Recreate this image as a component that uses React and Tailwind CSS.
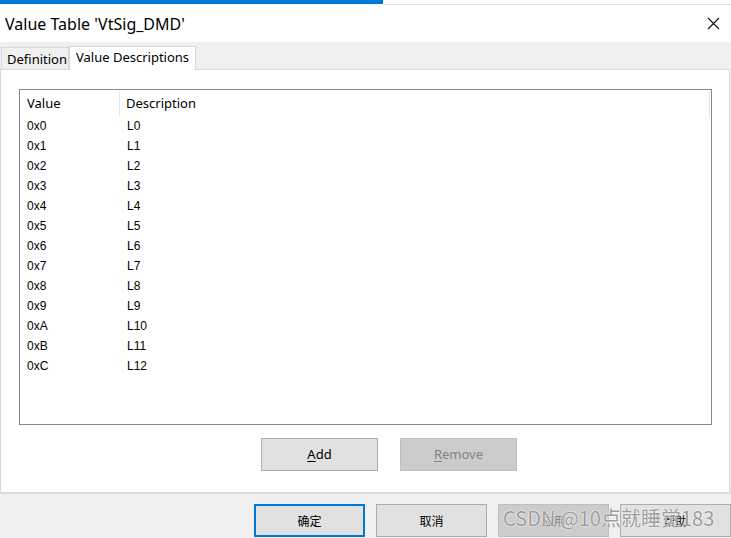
import React from "react";

const rows = [
  ["0x0", "L0"],
  ["0x1", "L1"],
  ["0x2", "L2"],
  ["0x3", "L3"],
  ["0x4", "L4"],
  ["0x5", "L5"],
  ["0x6", "L6"],
  ["0x7", "L7"],
  ["0x8", "L8"],
  ["0x9", "L9"],
  ["0xA", "L10"],
  ["0xB", "L11"],
  ["0xC", "L12"],
];

const ui = { fontFamily: '"Noto Sans", "Liberation Sans", "Noto Sans CJK SC", sans-serif' };
const cjk = { fontFamily: '"Noto Sans CJK SC", "Noto Sans", sans-serif' };

const FooterButton = ({ label, primary, disabled }) => (
  <button
    className={
      "w-[111px] h-[33px] text-[12px] flex items-center justify-center " +
      (primary
        ? "border-2 border-[#0078d7] bg-[#e1e1e1] text-black"
        : disabled
        ? "border border-[#bfbfbf] bg-[#cccccc] text-[#838383]"
        : "border border-[#adadad] bg-[#e1e1e1] text-black")
    }
    style={cjk}
  >
    {label}
  </button>
);

const App = () => {
  return (
    <div className="relative w-[731px] h-[538px] bg-white overflow-hidden" style={ui}>
      {/* top accent */}
      <div className="flex h-[5px]">
        <div className="w-[383px] h-[4px] bg-[#0078d7]"></div>
        <div className="flex-1 border-b border-[#e3e3e3]"></div>
      </div>

      {/* title bar */}
      <div className="h-[37px] flex items-center justify-between pl-[5px] pr-[9px]">
        <span className="text-[16px] text-black">Value Table 'VtSig_DMD'</span>
        <svg width="13" height="13" viewBox="0 0 13 13" className="mr-[2px]">
          <path d="M1 1 L12 12 M12 1 L1 12" stroke="#111" strokeWidth="1.1" />
        </svg>
      </div>

      {/* tab strip */}
      <div className="bg-[#f0f0f0] h-[451px] flex flex-col">
        <div className="h-[27px] flex items-end pl-[1px]">
          <div className="h-[22px] pl-[5px] pr-[1px] border border-b-0 border-[#d9d9d9] bg-[#f0f0f0] text-[13px] leading-[22px] text-black">
            Definition
          </div>
          <div className="h-[24px] px-[6px] border border-b-0 border-[#d9d9d9] bg-white text-[13px] leading-[21px] text-black -mb-[1px] relative z-10">
            Value Descriptions
          </div>
        </div>

        {/* panel */}
        <div className="flex-1 bg-white border border-[#d9d9d9] mr-[1px] flex flex-col">
          <div className="pl-[18px] pr-[17px] pt-[19px]">
            <div className="h-[336px] border border-[#828790] bg-white pt-[1px]">
              <div className="flex h-[25px] items-center text-[13px] text-black">
                <div className="w-[100px] pl-[7px] border-r border-[#e5e5e5] h-full flex items-center">Value</div>
                <div className="flex-1 pl-[6px] border-r border-[#e5e5e5] h-full flex items-center mr-[1px]">Description</div>
              </div>
              {rows.map(([v, d]) => (
                <div key={v} className="flex h-[20px] items-center text-[12px] text-black" style={{ fontFamily: '"Liberation Sans", sans-serif' }}>
                  <div className="w-[100px] pl-[7px]">{v}</div>
                  <div className="flex-1 pl-[7px]">{d}</div>
                </div>
              ))}
            </div>
          </div>

          <div className="flex gap-[22px] pt-[13px] pl-[260px]">
            <button className="w-[117px] h-[33px] border border-[#adadad] bg-[#e1e1e1] text-[13px] text-black">
              <span className="underline underline-offset-2">A</span>dd
            </button>
            <button className="w-[117px] h-[33px] border border-[#bfbfbf] bg-[#cccccc] text-[13px] text-[#838383]">
              <span className="underline underline-offset-2">R</span>emove
            </button>
          </div>
        </div>
      </div>

      {/* footer */}
      <div className="h-[45px] bg-[#f0f0f0] border-t border-[#dcdcdc] flex items-start justify-end pt-[10px] gap-[11px]">
        <FooterButton label="确定" primary />
        <FooterButton label="取消" />
        <FooterButton label="应用" disabled />
        <FooterButton label="帮助" />
      </div>

      {/* watermark */}
      <div
        className="absolute left-[503px] top-[503px] text-[20px] text-[#9c9c9c] whitespace-nowrap pointer-events-none"
        style={{ ...cjk, textShadow: "0 0 2px #fff, 0 0 1px #fff" }}
      >
        CSDN @10点就睡觉183
      </div>
    </div>
  );
};

export default App;
